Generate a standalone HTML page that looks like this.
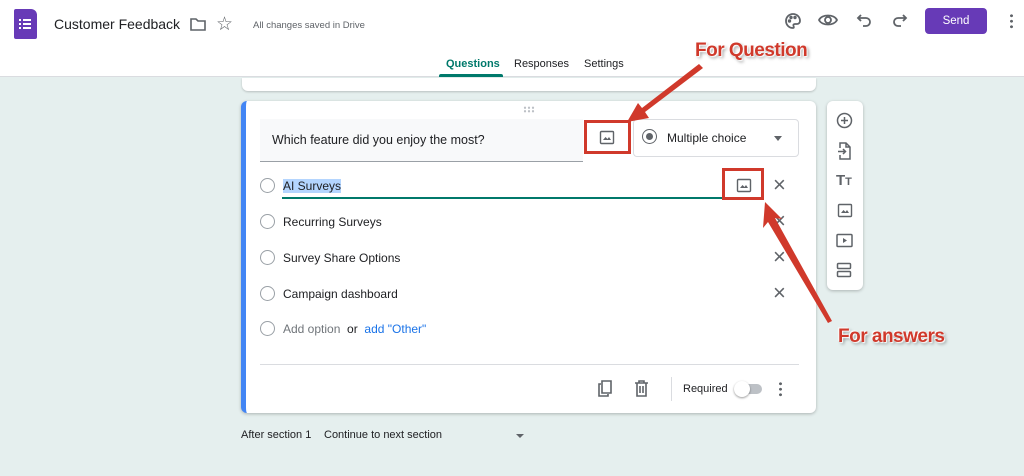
<!DOCTYPE html>
<html><head><style>
*{margin:0;padding:0;box-sizing:border-box}
body{width:1024px;height:476px;background:#e5efee;font-family:"Liberation Sans",sans-serif;position:relative;overflow:hidden;color:#202124}
.a{position:absolute}
.ic{position:absolute;fill:none;stroke:#5f6368;stroke-width:1.8}
.x{position:absolute;font-size:22px;color:#5f6368;line-height:1}
.rad{position:absolute;width:15px;height:15px;border:1.6px solid #9aa0a6;border-radius:50%}
.opt{position:absolute;font-size:12px;color:#202124}
</style></head><body>
<div class="a" style="left:0;top:0;width:1024px;height:77px;background:#fff;border-bottom:1px solid #dadce0"></div>
<div class="a" style="left:14px;top:9px;width:23px;height:30px;background:#673ab7;border-radius:2px 6px 2px 2px"></div>
<svg class="a" style="left:18px;top:18px" width="16" height="14"><g fill="#fff"><rect x="1" y="1" width="2" height="2"/><rect x="5" y="1" width="8" height="2"/><rect x="1" y="5" width="2" height="2"/><rect x="5" y="5" width="8" height="2"/><rect x="1" y="9" width="2" height="2"/><rect x="5" y="9" width="8" height="2"/></g></svg>
<div class="a" style="left:54px;top:16px;font-size:14px;color:#202124">Customer Feedback</div>
<svg class="ic" style="left:189px;top:16px;stroke-width:1.6" width="18" height="16"><path d="M2 3h5l2 2h7v9H2z"/></svg>
<div class="a" style="left:216px;top:13px;font-size:19px;color:#5f6368">☆</div>
<div class="a" style="left:253px;top:20px;font-size:9.5px;color:#5f6368">All changes saved in Drive</div>
<svg class="ic" style="left:784px;top:12px" width="18" height="18"><path d="M9 2a7 7 0 0 0 0 14c1 0 1-1 .5-2s0-2 1.5-2h2a3 3 0 0 0 3-3C16 5 13 2 9 2z"/><circle cx="5.5" cy="9" r=".8"/><circle cx="7" cy="5.5" r=".8"/><circle cx="11" cy="5.5" r=".8"/></svg>
<svg class="ic" style="left:818px;top:13px" width="20" height="14"><path d="M1 7c3-6 15-6 18 0c-3 6-15 6-18 0z"/><circle cx="10" cy="7" r="3"/></svg>
<svg class="ic" style="left:856px;top:13px" width="16" height="14"><path d="M5 2L2 5l3 3M2 5h8a4 4 0 0 1 0 8H7"/></svg>
<svg class="ic" style="left:892px;top:13px" width="16" height="14"><path d="M11 2l3 3-3 3M14 5H6a4 4 0 0 0 0 8h3"/></svg>
<div class="a" style="left:925px;top:8px;width:62px;height:26px;background:#673ab7;border-radius:4px;color:#fff;font-size:11.5px;text-align:center;line-height:26px">Send</div>
<div class="a" style="left:1010px;top:13px;width:3px;height:16px;background:radial-gradient(circle,#5f6368 1.3px,transparent 1.6px) 0 0/3px 5.5px"></div>
<div class="a" style="left:446px;top:58px;font-size:11px;color:#00796b;font-weight:bold">Questions</div>
<div class="a" style="left:439px;top:74px;width:64px;height:3px;background:#00796b;border-radius:2px 2px 0 0"></div>
<div class="a" style="left:514px;top:58px;font-size:11px;color:#202124">Responses</div>
<div class="a" style="left:584px;top:58px;font-size:11px;color:#202124">Settings</div>
<div class="a" style="left:242px;top:78px;width:574px;height:13px;background:#fff;border-radius:0 0 6px 6px;box-shadow:0 1px 2px rgba(0,0,0,.2)"></div>
<div class="a" style="left:241px;top:101px;width:575px;height:312px;background:#fff;border-radius:6px;border-left:5px solid #4285f4;box-shadow:0 1px 3px rgba(0,0,0,.25)"></div>
<div class="a" style="left:523px;top:106px;width:12px;height:7px;background:radial-gradient(circle,#bdc1c6 1px,transparent 1.3px) 0 0/4px 3.5px"></div>
<div class="a" style="left:260px;top:119px;width:323px;height:43px;background:#f8f9fa;border-bottom:1px solid #9aa0a6"></div>
<div class="a" style="left:272px;top:133px;font-size:12.5px">Which feature did you enjoy the most?</div>
<svg class="ic" style="left:599px;top:130px;stroke-width:1.4" width="16" height="15"><rect x="1.5" y="1.5" width="13" height="12" rx="1"/><path d="M4 10l2.5-3 2 2 1.5-2 2 3z" fill="#5f6368" stroke="none"/></svg>
<div class="a" style="left:633px;top:119px;width:166px;height:38px;border:1px solid #dadce0;border-radius:4px"></div>
<div class="a" style="left:642px;top:129px;width:15px;height:15px;border:1.6px solid #5f6368;border-radius:50%"></div>
<div class="a" style="left:646px;top:133px;width:7px;height:7px;background:#5f6368;border-radius:50%"></div>
<div class="a" style="left:667px;top:131px;font-size:12px">Multiple choice</div>
<div class="a" style="left:774px;top:136px;border:4px solid transparent;border-top:5px solid #5f6368"></div>
<div class="a" style="left:584px;top:120px;width:47px;height:34px;border:3px solid #d0392b"></div>
<div class="rad" style="left:260px;top:178px"></div>
<div class="opt" style="left:283px;top:179px;background:#b4d5fe">AI Surveys</div>
<div class="a" style="left:282px;top:197px;width:440px;height:2px;background:#00796b"></div>
<svg class="ic" style="left:736px;top:178px;stroke-width:1.4" width="16" height="15"><rect x="1.5" y="1.5" width="13" height="12" rx="1"/><path d="M4 10l2.5-3 2 2 1.5-2 2 3z" fill="#5f6368" stroke="none"/></svg>
<div class="a" style="left:722px;top:168px;width:42px;height:32px;border:3px solid #d0392b"></div>
<div class="x" style="left:773px;top:174px">×</div>
<div class="rad" style="left:260px;top:214px"></div><div class="opt" style="left:283px;top:215px">Recurring Surveys</div><div class="x" style="left:773px;top:210px">×</div>
<div class="rad" style="left:260px;top:250px"></div><div class="opt" style="left:283px;top:251px">Survey Share Options</div><div class="x" style="left:773px;top:246px">×</div>
<div class="rad" style="left:260px;top:286px"></div><div class="opt" style="left:283px;top:287px">Campaign dashboard</div><div class="x" style="left:773px;top:282px">×</div>
<div class="rad" style="left:260px;top:321px"></div>
<div class="opt" style="left:283px;top:322px;color:#70757a">Add option <span style="color:#202124">&nbsp;or&nbsp;</span> <span style="color:#1a73e8">add "Other"</span></div>
<div class="a" style="left:260px;top:364px;width:539px;height:1px;background:#dadce0"></div>
<svg class="ic" style="left:597px;top:380px;stroke-width:1.6" width="16" height="18"><path d="M4 4H2v12h9v-2M5 1h9v12H5z"/></svg>
<svg class="ic" style="left:634px;top:380px;stroke-width:1.6" width="15" height="17"><path d="M1 3h13M5 3V1h5v2M3 3v13h9V3M6 6v7M9 6v7"/></svg>
<div class="a" style="left:671px;top:377px;width:1px;height:24px;background:#dadce0"></div>
<div class="a" style="left:683px;top:383px;font-size:11px">Required</div>
<div class="a" style="left:738px;top:384px;width:24px;height:10px;background:#bdc1c6;border-radius:5px"></div>
<div class="a" style="left:734px;top:381px;width:16px;height:16px;background:#fff;border-radius:50%;box-shadow:0 1px 2px rgba(0,0,0,.4)"></div>
<div class="a" style="left:779px;top:381px;width:3px;height:16px;background:radial-gradient(circle,#5f6368 1.3px,transparent 1.6px) 0 0/3px 5.5px"></div>
<div class="a" style="left:827px;top:101px;width:36px;height:189px;background:#fff;border-radius:6px;box-shadow:0 1px 3px rgba(0,0,0,.25)"></div>
<svg class="ic" style="left:836px;top:112px;stroke-width:1.5" width="17" height="17"><circle cx="8.5" cy="8.5" r="7"/><path d="M8.5 5v7M5 8.5h7"/></svg>
<svg class="ic" style="left:837px;top:142px;stroke-width:1.5" width="15" height="18"><path d="M3 6V1h6l4 4v12H3v-4M9 1v4h4M1 9.5h7M6 7l2.5 2.5L6 12"/></svg>
<div class="a" style="left:836px;top:172px;font-size:15px;font-weight:bold;color:#5f6368">T<span style="font-size:11px">T</span></div>
<svg class="ic" style="left:837px;top:203px;stroke-width:1.4" width="16" height="15"><rect x="1.5" y="1.5" width="13" height="12" rx="1"/><path d="M4 10l2.5-3 2 2 1.5-2 2 3z" fill="#5f6368" stroke="none"/></svg>
<svg class="ic" style="left:836px;top:233px;stroke-width:1.5" width="17" height="15"><rect x="1" y="1.5" width="15" height="12" rx="1"/><path d="M7 5v5l4-2.5z" fill="#5f6368" stroke="none"/></svg>
<svg class="ic" style="left:836px;top:262px;stroke-width:1.5" width="17" height="16"><rect x="1.5" y="1.5" width="13" height="5" rx="1"/><rect x="1.5" y="9.5" width="13" height="5" rx="1"/></svg>
<div class="a" style="left:241px;top:429px;font-size:11px">After section 1</div>
<div class="a" style="left:324px;top:429px;font-size:11px">Continue to next section</div>
<div class="a" style="left:516px;top:434px;border:4px solid transparent;border-top:4px solid #5f6368"></div>
<svg class="a" style="left:0;top:0" width="1024" height="476">
<polygon points="699,64 703,68 645,112 649,118 627,122 638,103 642,108" fill="#d0392b"/>
<polygon points="832,321 828,323 768,222 763,228 765,202 782,219 775,218" fill="#d0392b"/>
</svg>
<div class="a" style="left:695px;top:40px;font-size:19px;font-weight:bold;color:#d0392b;text-shadow:1px 1px 1px #fff,-1px -1px 1px #fff,2px 2px 3px rgba(0,0,0,.4);letter-spacing:-.5px">For Question</div>
<div class="a" style="left:838px;top:326px;font-size:19px;font-weight:bold;color:#d0392b;text-shadow:1px 1px 1px #fff,-1px -1px 1px #fff,2px 2px 3px rgba(0,0,0,.4);letter-spacing:-.5px">For answers</div>
</body></html>
